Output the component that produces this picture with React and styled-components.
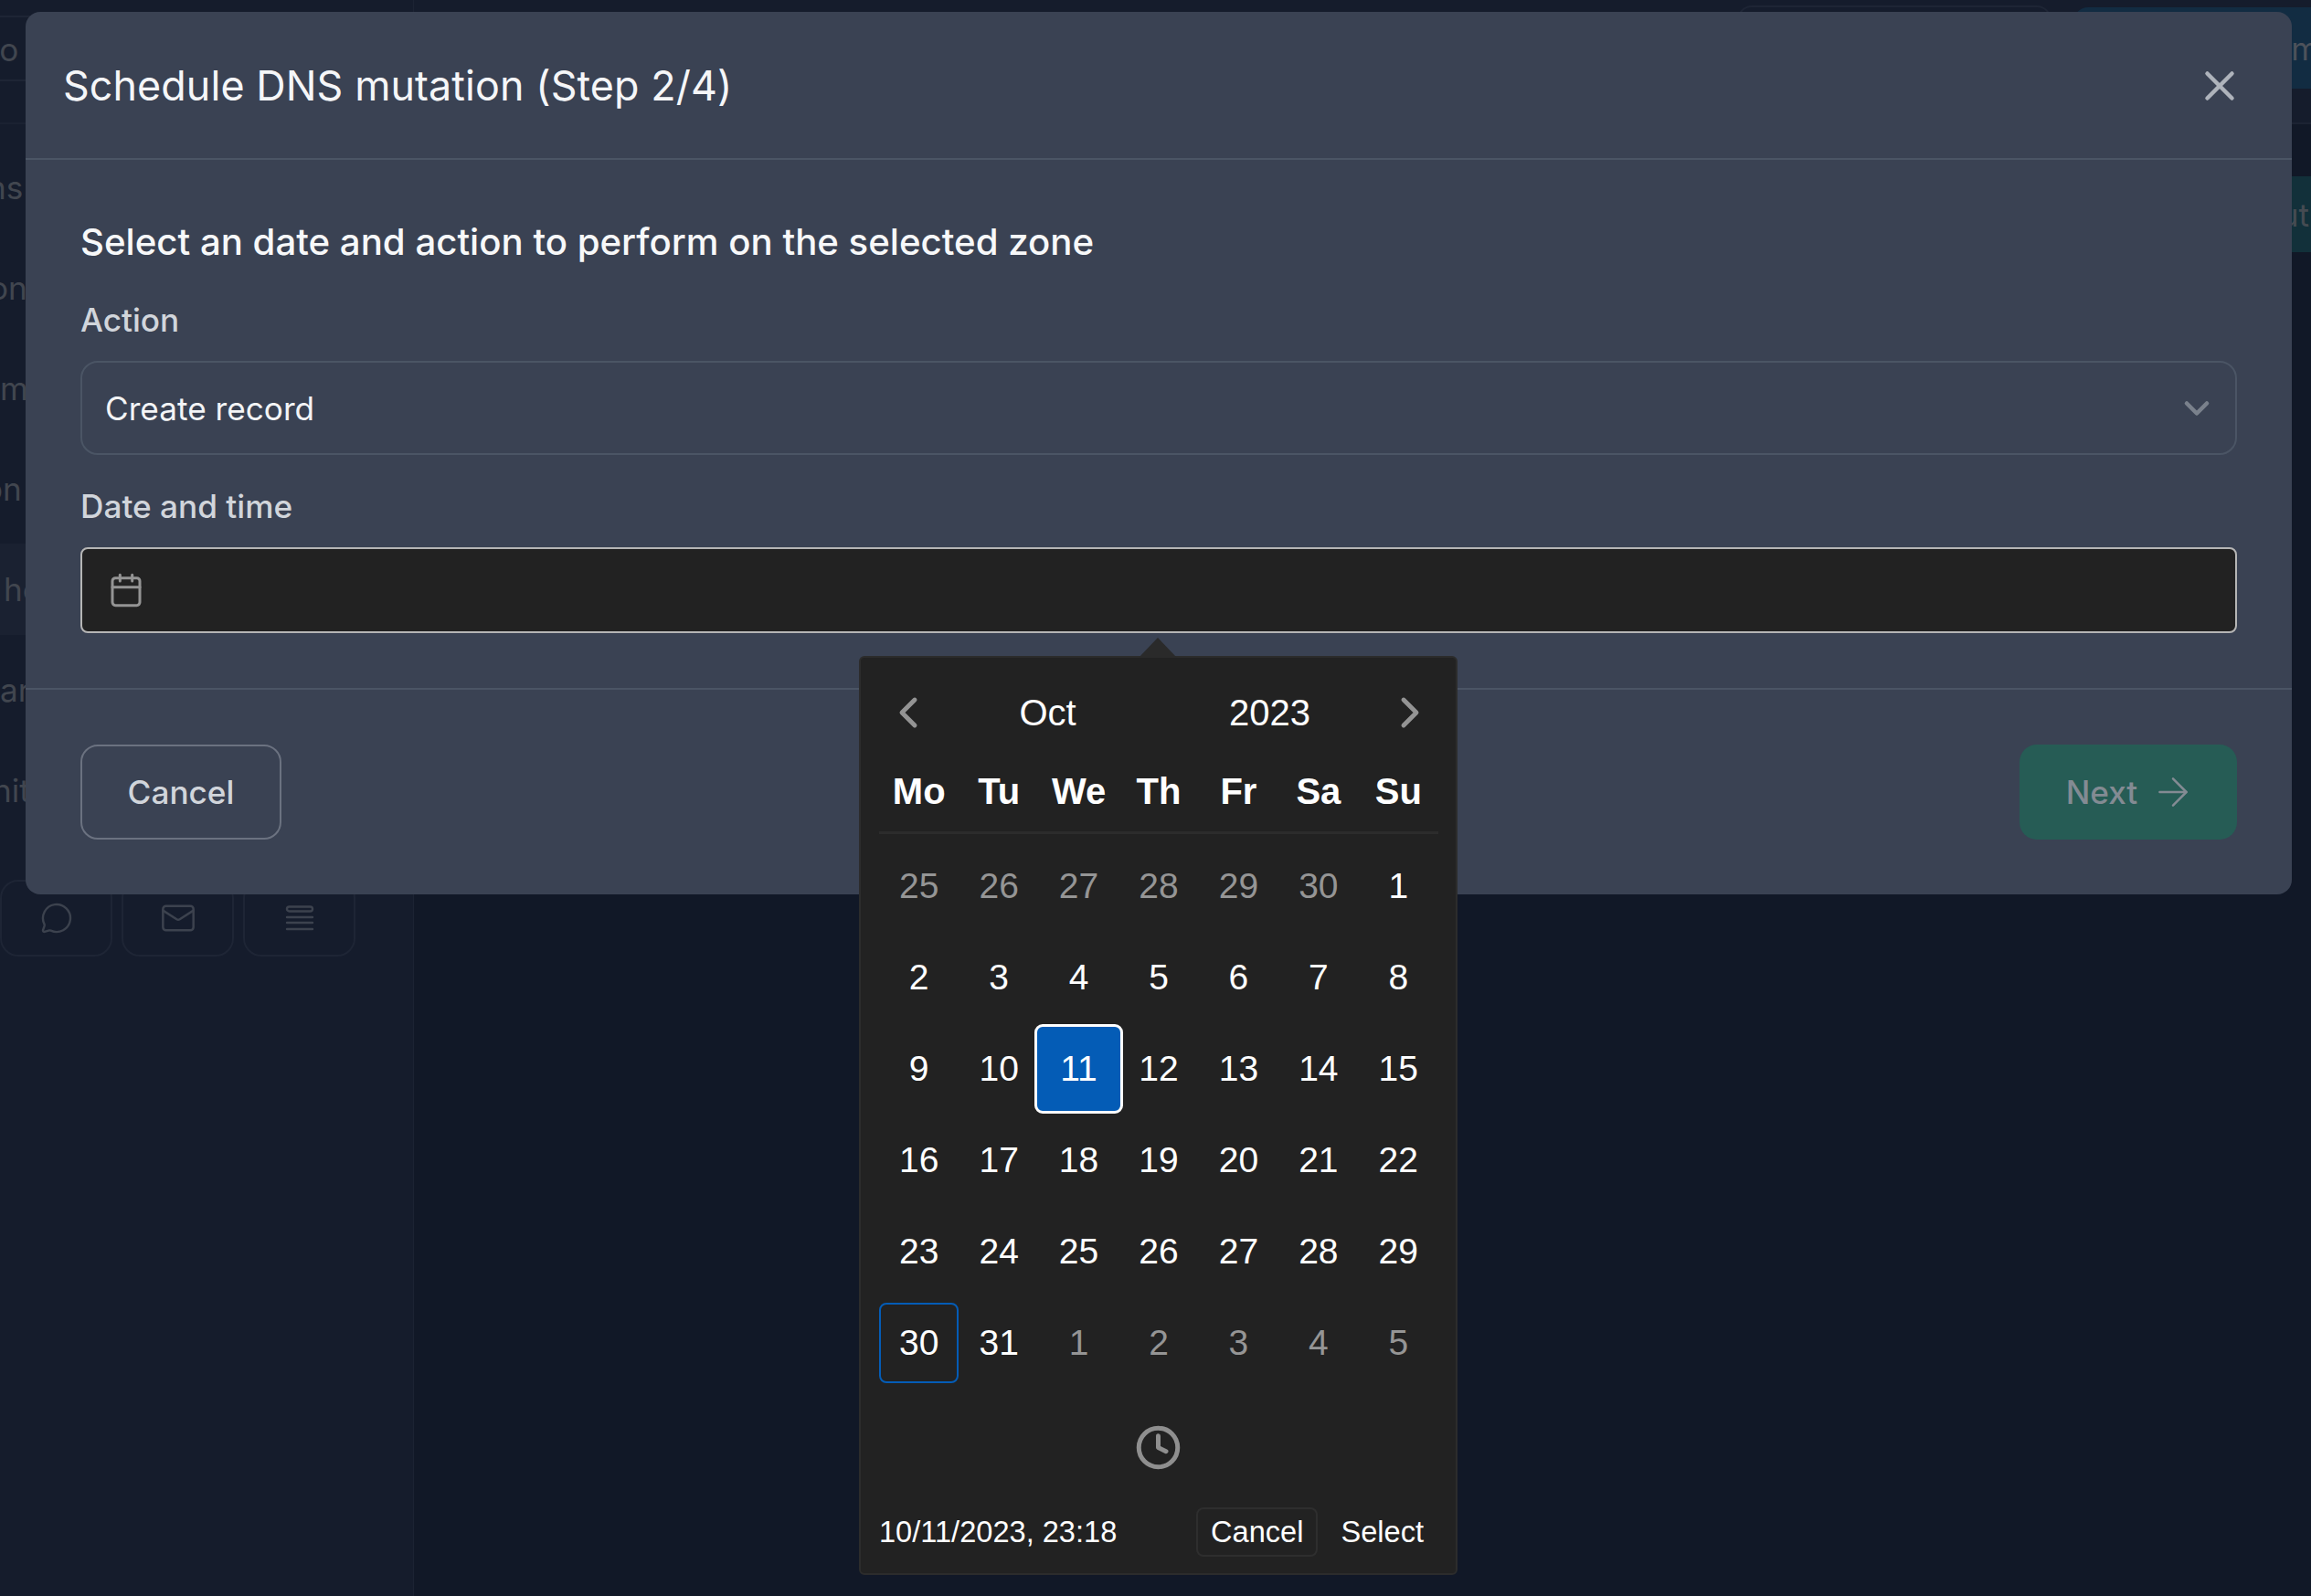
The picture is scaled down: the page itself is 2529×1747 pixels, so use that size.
import React from 'react';
import styled, { createGlobalStyle } from 'styled-components';
import {
  ChevronDown, ChevronLeft, ChevronRight, X, ArrowRight, Calendar, Clock, MessageCircle, Mail,
} from 'lucide-react';

const GlobalStyle = createGlobalStyle`
  html, body {
    margin: 0;
    padding: 0;
    background: #111827;
    overflow: hidden;
  }
`;

const Page = styled.div`
  position: relative;
  display: flex;
  width: 2529px;
  height: 1747px;
  overflow: hidden;
  background: #111827;
  font-family: Inter, "Liberation Sans", sans-serif;
`;

/* the app behind the dialog, dimmed */
const Sidebar = styled.aside`
  width: 453px;
  flex: none;
  display: flex;
  flex-direction: column;
  box-sizing: border-box;
  padding-top: 17px;
  background: #151c2c;
  border-right: 1px solid #1c2333;
  color: #41464f;
  font-size: 35.2px;
`;

const BrandRow = styled.div`
  height: 72px;
  flex: none;
  display: flex;
  align-items: center;
  padding-top: 2px;
  border-top: 2px solid #1e2535;
  border-bottom: 2px solid #1e2535;
  box-sizing: border-box;
`;

const SubRow = styled.div`
  height: 47px;
  flex: none;
  border-bottom: 2px solid #1a2131;
  box-sizing: border-box;
  margin-bottom: 19px;
`;

const NavList = styled.nav`
  display: flex;
  flex-direction: column;
  gap: 10px;
`;

const NavItem = styled.div`
  height: 100px;
  display: flex;
  align-items: center;
  background: ${(p) => (p.$active ? '#1a2131' : 'transparent')};
`;

const Tail = styled.span`
  margin-left: ${(p) => p.$x}px;
  white-space: nowrap;
`;

const IconRow = styled.div`
  display: flex;
  gap: 10px;
  margin-top: 48px;
  color: #3c424e;
`;

const IconTile = styled.div`
  width: 123px;
  height: 84px;
  display: flex;
  align-items: center;
  justify-content: center;
  box-sizing: border-box;
  border: 2px solid #1e2535;
  border-radius: 20px;
`;

const Main = styled.main`
  flex: 1;
  display: flex;
  flex-direction: column;
`;

const TopBar = styled.div`
  height: 136px;
  flex: none;
  box-sizing: border-box;
  display: flex;
  justify-content: flex-end;
  gap: 24px;
  padding-top: 6px;
  background: #151c2c;
  border-bottom: 2px solid #1c2333;
`;

const GhostButton = styled.div`
  width: 344px;
  height: 90px;
  border: 2px solid #1e2535;
  border-radius: 16px;
  box-sizing: border-box;
`;

const BlueButton = styled.div`
  width: 260px;
  height: 89px;
  margin-top: 2px;
  border-radius: 16px 0 0 16px;
  background: #122c42;
  color: #4d525b;
  font-size: 35.2px;
  display: flex;
  align-items: center;
  justify-content: flex-end;
  overflow: hidden;
`;

const BlueText = styled.span`
  margin-right: -9px;
`;

const GreenStrip = styled.div`
  align-self: flex-end;
  margin-top: 57px;
  height: 83px;
  width: 120px;
  display: flex;
  align-items: center;
  justify-content: flex-end;
  padding-right: 2px;
  box-sizing: border-box;
  background: #12303a;
  color: #454b52;
  font-size: 35.2px;
`;

/* dialog */
const Modal = styled.div`
  position: absolute;
  left: 28px;
  top: 13px;
  width: 2480px;
  height: 966px;
  display: flex;
  flex-direction: column;
  border-radius: 16px;
  background: #3a4253;
  color: #fff;
`;

const ModalHeader = styled.header`
  height: 162px;
  flex: none;
  box-sizing: border-box;
  display: flex;
  align-items: center;
  justify-content: space-between;
  padding: 1px 52px 0 41px;
  border-bottom: 2px solid #4b5565;
`;

const Title = styled.h1`
  margin: 0;
  font-size: 44.8px;
  font-weight: 400;
  letter-spacing: 0.1px;
  color: #f5f6f8;
`;

const CloseButton = styled.button`
  display: flex;
  padding: 0;
  border: 0;
  background: none;
  color: #aeb3bb;
`;

const ModalBody = styled.section`
  flex: none;
  height: 580px;
  box-sizing: border-box;
  padding: 62px 60px 0;
  border-bottom: 2px solid #4b5565;
`;

const Lead = styled.h2`
  margin: 0 0 33px;
  font-size: 40.2px;
  line-height: 56px;
  font-weight: 500;
  color: #f7f8f9;
`;

const Label = styled.label`
  display: block;
  margin-bottom: 21px;
  font-size: 35.2px;
  line-height: 48px;
  font-weight: 500;
  color: #d1d5db;
`;

const SelectBox = styled.div`
  height: 103px;
  box-sizing: border-box;
  display: flex;
  align-items: center;
  justify-content: space-between;
  padding: 0 20px 0 25px;
  margin-bottom: 32px;
  border: 2px solid #4b5565;
  border-radius: 19px;
  font-size: 35.2px;
  color: #f3f4f6;
  svg { color: #7a818c; }
`;

const DateField = styled.div`
  height: 94px;
  box-sizing: border-box;
  display: flex;
  align-items: center;
  padding-left: 28px;
  background: #222;
  border: 2px solid #b5b5b5;
  border-radius: 8px;
  color: #949494;
`;

const ModalFooter = styled.footer`
  flex: 1;
  display: flex;
  align-items: center;
  justify-content: space-between;
  padding: 0 60px;
`;

const FooterButton = styled.button`
  height: 104px;
  box-sizing: border-box;
  display: flex;
  align-items: center;
  justify-content: center;
  gap: 14px;
  border-radius: 19px;
  font: 500 35.2px Inter, sans-serif;
  width: ${(p) => p.$w}px;
  padding: ${(p) => (p.$primary ? '0 0 0 6px' : '0')};
  border: ${(p) => (p.$primary ? '0' : '2px solid #6b7280')};
  background: ${(p) => (p.$primary ? '#265c55' : 'transparent')};
  color: ${(p) => (p.$primary ? '#838b93' : '#d1d5db')};
`;

/* calendar popover */
const Popover = styled.div`
  position: absolute;
  left: 940px;
  top: 718px;
  width: 655px;
  height: 1006px;
  box-sizing: border-box;
  padding: 0 19px 0 20px;
  display: flex;
  flex-direction: column;
  background: #222;
  border: 2px solid #2c2c2c;
  border-radius: 6px;
  color: #fff;
  font-family: "Liberation Sans", Arial, sans-serif;
  font-size: 39px;
`;

const Arrow = styled.div`
  position: absolute;
  left: 304px;
  top: -22px;
  width: 0;
  height: 0;
  border-left: 21px solid transparent;
  border-right: 21px solid transparent;
  border-bottom: 22px solid #2a2a2a;
`;

const MonthBar = styled.div`
  height: 50px;
  margin-top: 35px;
  display: grid;
  grid-template-columns: 63px 1fr 1fr 63px;
  grid-template-rows: 50px;
  align-items: center;
  justify-items: center;
  font-size: 40px;
  svg { color: #949494; }
`;

const WeekHead = styled.div`
  height: 60px;
  margin-top: 31px;
  padding-bottom: 14px;
  display: grid;
  grid-template-columns: repeat(7, 1fr);
  align-items: center;
  justify-items: center;
  border-bottom: 3px solid #2c2c2c;
  font-weight: 700;
  font-size: 40px;
`;

const DayGrid = styled.div`
  margin-top: 7px;
  display: grid;
  grid-template-columns: repeat(7, 1fr);
  grid-auto-rows: 100px;
`;

const Day = styled.div`
  position: relative;
  display: flex;
  align-items: center;
  justify-content: center;
  color: ${(p) => (p.$muted ? '#959595' : '#fff')};
`;

const SelectedMark = styled.span`
  position: absolute;
  left: -5px;
  right: -5px;
  top: 1px;
  bottom: 1px;
  box-sizing: border-box;
  background: #045cb6;
  border: 3px solid #fff;
  border-radius: 9px;
`;

const TodayMark = styled.span`
  position: absolute;
  left: 0;
  right: 0;
  top: 6px;
  bottom: 6px;
  box-sizing: border-box;
  border: 2px solid #045cb6;
  border-radius: 8px;
`;

const DayNum = styled.span`
  position: relative;
`;

const ClockRow = styled.div`
  display: flex;
  justify-content: center;
  margin-top: 39px;
  padding-right: 2px;
  color: #8f8f8f;
`;

const PopFooter = styled.div`
  margin-top: 40px;
  display: flex;
  align-items: center;
  font-size: 32.6px;
`;

const Stamp = styled.span`
  flex: 1;
`;

const PopButton = styled.button`
  height: 54px;
  box-sizing: border-box;
  padding: 0 14px;
  background: none;
  color: #fff;
  font: 32.6px "Liberation Sans", Arial, sans-serif;
  border-radius: 8px;
  border: 2px solid ${(p) => (p.$outlined ? '#2e2e2e' : 'transparent')};
  margin-right: ${(p) => p.$mr || 0}px;
`;

const WEEK = ['Mo', 'Tu', 'We', 'Th', 'Fr', 'Sa', 'Su'];

const DAYS = [
  [25, 1], [26, 1], [27, 1], [28, 1], [29, 1], [30, 1],
  ...Array.from({ length: 31 }, (_, i) => [i + 1, 0]),
  [1, 1], [2, 1], [3, 1], [4, 1], [5, 1],
];

const NAV = [
  { tail: 'ns', x: -14 },
  { tail: 'on', x: -12 },
  { tail: 'm', x: 0 },
  { tail: 'on', x: -18 },
  { tail: 'he', x: 4, active: true },
  { tail: 'ar', x: 0 },
  { tail: 'nit', x: -8 },
];

function ListIcon() {
  return (
    <svg width="32" height="28" viewBox="0 0 32 28" fill="none" stroke="currentColor" strokeWidth="2.4" strokeLinecap="round">
      <rect x="2" y="1.5" width="28" height="5" rx="2.5" />
      <path d="M2 13h28M2 19h28M2 26h28" />
    </svg>
  );
}

function App() {
  return (
    <Page>
      <GlobalStyle />

      <Sidebar>
        <BrandRow><Tail $x={-12}>to</Tail></BrandRow>
        <SubRow />
        <NavList>
          {NAV.map((item) => (
            <NavItem key={item.tail + item.x} $active={item.active}>
              <Tail $x={item.x}>{item.tail}</Tail>
            </NavItem>
          ))}
        </NavList>
        <IconRow>
          <IconTile><MessageCircle size={36} strokeWidth={1.6} /></IconTile>
          <IconTile><Mail size={40} strokeWidth={1.5} /></IconTile>
          <IconTile><ListIcon /></IconTile>
        </IconRow>
      </Sidebar>

      <Main>
        <TopBar>
          <GhostButton />
          <BlueButton><BlueText>m</BlueText></BlueButton>
        </TopBar>
        <GreenStrip>ut</GreenStrip>
      </Main>

      <Modal>
        <ModalHeader>
          <Title>Schedule DNS mutation (Step 2/4)</Title>
          <CloseButton><X size={54} strokeWidth={2} /></CloseButton>
        </ModalHeader>

        <ModalBody>
          <Lead>Select an date and action to perform on the selected zone</Lead>
          <Label>Action</Label>
          <SelectBox>
            Create record
            <ChevronDown size={44} strokeWidth={2.5} />
          </SelectBox>
          <Label>Date and time</Label>
          <DateField>
            <Calendar size={40} strokeWidth={1.8} />
          </DateField>
        </ModalBody>

        <ModalFooter>
          <FooterButton $w={220}>Cancel</FooterButton>
          <FooterButton $w={238} $primary>
            Next
            <ArrowRight size={50} strokeWidth={1.2} />
          </FooterButton>
        </ModalFooter>
      </Modal>

      <Popover>
        <Arrow />
        <MonthBar>
          <ChevronLeft size={56} strokeWidth={2.1} />
          <span>Oct</span>
          <span>2023</span>
          <ChevronRight size={56} strokeWidth={2.1} />
        </MonthBar>
        <WeekHead>
          {WEEK.map((d) => <span key={d}>{d}</span>)}
        </WeekHead>
        <DayGrid>
          {DAYS.map(([n, muted], i) => (
            <Day key={i} $muted={muted}>
              {n === 11 && !muted && <SelectedMark />}
              {n === 30 && !muted && <TodayMark />}
              <DayNum>{n}</DayNum>
            </Day>
          ))}
        </DayGrid>
        <ClockRow><Clock size={51} strokeWidth={2.35} /></ClockRow>
        <PopFooter>
          <Stamp>10/11/2023, 23:18</Stamp>
          <PopButton $outlined $mr={9}>Cancel</PopButton>
          <PopButton>Select</PopButton>
        </PopFooter>
      </Popover>
    </Page>
  );
}

export default App;
